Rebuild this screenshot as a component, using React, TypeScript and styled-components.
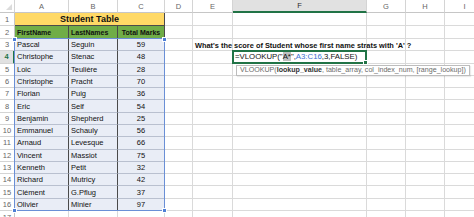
import React from "react";
import styled, { createGlobalStyle, css } from "styled-components";

const Global = createGlobalStyle`
  html, body { margin: 0; padding: 0; background: #fff; overflow: hidden; }
  body { font-family: "Liberation Sans", Arial, sans-serif; }
`;

const ROW_H = 172 / 14;

const Sheet = styled.div`
  display: grid;
  grid-template-columns: 15px 54px 49px 47px 28px 40px 134px 39px 39px 40px;
  grid-template-rows: 13px 13px 13px repeat(14, ${ROW_H}px) 14px;
  width: 474px;
  height: 217px;
  overflow: hidden;
  position: relative;
  font-size: 7.5px;
  color: #111;
`;

type Pos = { $row: number; $col: number; $span?: number };

const placed = css<Pos>`
  grid-row: ${(p) => p.$row};
  grid-column: ${(p) => p.$col} / span ${(p) => p.$span ?? 1};
`;

const Corner = styled.div<Pos>`
  ${placed};
  background: #fff;
  border-right: 1px solid #d4d4d4;
  border-bottom: 1px solid #c6c6c6;
  box-sizing: border-box;
  position: relative;
  &::after {
    content: "";
    position: absolute;
    right: 2px;
    bottom: 2px;
    border-left: 6px solid transparent;
    border-bottom: 6px solid #dcdcdc;
  }
`;

const ColHead = styled.div<Pos & { $sel?: boolean }>`
  ${placed};
  box-sizing: border-box;
  display: flex;
  align-items: center;
  justify-content: center;
  background: ${(p) => (p.$sel ? "#e1e1e1" : "#fff")};
  color: ${(p) => (p.$sel ? "#2a2a2a" : "#666")};
  border-right: 1px solid #d4d4d4;
  border-bottom: ${(p) => (p.$sel ? "2px solid #217346" : "1px solid #c6c6c6")};
  font-size: 7.5px;
`;

const RowHead = styled.div<Pos & { $sel?: boolean }>`
  ${placed};
  box-sizing: border-box;
  display: flex;
  align-items: center;
  justify-content: center;
  background: ${(p) => (p.$sel ? "#e1e1e1" : "#fff")};
  color: ${(p) => (p.$sel ? "#217346" : "#666")};
  font-weight: ${(p) => (p.$sel ? 700 : 400)};
  border-right: ${(p) => (p.$sel ? "2px solid #217346" : "1px solid #c6c6c6")};
  border-bottom: 1px solid #d4d4d4;
  font-size: 7.5px;
`;

type CellProps = Pos & {
  $bg?: string;
  $align?: "left" | "center" | "right";
  $bold?: boolean;
  $size?: number;
  $edgeR?: string;
  $edgeB?: string;
};

const Cell = styled.div<CellProps>`
  ${placed};
  box-sizing: border-box;
  display: flex;
  align-items: center;
  justify-content: ${(p) =>
    p.$align === "center" ? "center" : p.$align === "right" ? "flex-end" : "flex-start"};
  padding: 0 2px;
  white-space: nowrap;
  overflow: visible;
  background: ${(p) => p.$bg ?? "transparent"};
  font-weight: ${(p) => (p.$bold ? 700 : 400)};
  font-size: ${(p) => p.$size ?? 7.5}px;
  border-right: 1px solid ${(p) => p.$edgeR ?? "#dadada"};
  border-bottom: 1px solid ${(p) => p.$edgeB ?? "#dadada"};
`;

const Question = styled.div<Pos>`
  ${placed};
  display: flex;
  align-items: center;
  padding-left: 2px;
  white-space: nowrap;
  font-weight: 700;
  font-size: 7.4px;
  position: relative;
  z-index: 1;
`;

const RangeBox = styled.div<Pos & { $rowSpan: number }>`
  grid-row: ${(p) => p.$row} / span ${(p) => p.$rowSpan};
  grid-column: ${(p) => p.$col} / span ${(p) => p.$span ?? 1};
  border: 1px solid #6a8fd6;
  margin: -1px 0 0 -1px;
  position: relative;
  pointer-events: none;
  z-index: 2;
`;

const Handle = styled.span<{ $top?: boolean; $left?: boolean; $color: string }>`
  position: absolute;
  width: 3px;
  height: 3px;
  background: ${(p) => p.$color};
  border: 1px solid #fff;
  ${(p) => (p.$top ? "top: -2px;" : "bottom: -3px;")}
  ${(p) => (p.$left ? "left: -3px;" : "right: -3px;")}
`;

const ActiveCell = styled.div<Pos>`
  ${placed};
  box-sizing: border-box;
  margin: -1px 0 0 -1px;
  border: 2px solid #217346;
  background: #fff;
  display: flex;
  align-items: center;
  padding-left: 1px;
  white-space: nowrap;
  font-size: 7.8px;
  position: relative;
  z-index: 3;
`;

const Sel = styled.span`
  background: #bfbfbf;
`;

const Ref = styled.span`
  color: #3d6fd0;
`;

const Tip = styled.div<Pos>`
  ${placed};
  justify-self: start;
  align-self: stretch;
  margin: 1px 0 0 3px;
  box-sizing: border-box;
  border: 1px solid #bdbdbd;
  background: #fff;
  color: #6b6b6b;
  font-size: 7.1px;
  display: flex;
  align-items: center;
  padding: 0 3px 0 3px;
  white-space: nowrap;
  position: relative;
  z-index: 5;
  box-shadow: 1px 1px 1px rgba(0, 0, 0, 0.08);
`;

const TipArg = styled.b`
  color: #333;
`;

const COLS = ["A", "B", "C", "D", "E", "F", "G", "H", "I"];

const data: [string, string, number][] = [
  ["Pascal", "Seguin", 59],
  ["Christophe", "Stenac", 48],
  ["Loic", "Teulière", 28],
  ["Christophe", "Pracht", 70],
  ["Florian", "Puig", 36],
  ["Eric", "Self", 54],
  ["Benjamin", "Shepherd", 25],
  ["Emmanuel", "Schauly", 56],
  ["Arnaud", "Levesque", 66],
  ["Vincent", "Massiot", 75],
  ["Kenneth", "Petit", 32],
  ["Richard", "Mutricy", 42],
  ["Clément", "G.Pflug", 37],
  ["Olivier", "Minier", 97],
];

const TABLE_BG = "#e9edf6";
const TABLE_V = "#4a4a4a";
const TABLE_H = "#b9c0cf";

export default function App() {
  const cells: React.ReactNode[] = [];
  cells.push(<Corner key="corner" $row={1} $col={1} />);
  COLS.forEach((c, i) => (
    cells.push(
      <ColHead key={"h" + c} $row={1} $col={i + 2} $sel={c === "F"}>
        {c}
      </ColHead>
    )
  ));

  for (let r = 1; r <= 17; r++) {
    const gr = r + 1;
    cells.push(
      <RowHead key={"r" + r} $row={gr} $col={1} $sel={r === 4}>
        {r}
      </RowHead>
    );
    if (r === 1) {
      cells.push(
        <Cell key="title" $row={gr} $col={2} $span={3} $bg="#ffd966" $align="center" $bold $size={9} $edgeR={TABLE_V} $edgeB={TABLE_V}>
          Student Table
        </Cell>
      );
    } else if (r === 2) {
      ["FirstName", "LastNames", "Total Marks"].forEach((t, i) =>
        cells.push(
          <Cell key={"hd" + i} $row={gr} $col={i + 2} $bg="#70ad47" $bold $size={7} $align={i === 2 ? "center" : "left"} $edgeR={TABLE_V} $edgeB={TABLE_V}>
            {t}
          </Cell>
        )
      );
    } else if (r >= 3 && r <= 16) {
      const d = data[r - 3];
      cells.push(
        <Cell key={"a" + r} $row={gr} $col={2} $bg={TABLE_BG} $edgeR={TABLE_V} $edgeB={TABLE_H}>{d[0]}</Cell>,
        <Cell key={"b" + r} $row={gr} $col={3} $bg={TABLE_BG} $edgeR={TABLE_V} $edgeB={TABLE_H}>{d[1]}</Cell>,
        <Cell key={"c" + r} $row={gr} $col={4} $bg={TABLE_BG} $align="center" $edgeR={TABLE_V} $edgeB={TABLE_H}>{d[2]}</Cell>
      );
    } else {
      for (let c = 0; c < 3; c++) cells.push(<Cell key={`x${r}-${c}`} $row={gr} $col={c + 2} />);
    }
    for (let c = 3; c < 9; c++) {
      cells.push(<Cell key={`e${r}-${c}`} $row={gr} $col={c + 2} />);
    }
  }

  return (
    <>
      <Global />
      <Sheet>
        {cells}
        <Question $row={4} $col={6}>
          What's the score of Student whose first name strats with 'A' ?
        </Question>
        <RangeBox $row={4} $rowSpan={14} $col={2} $span={3}>
          <Handle $top $left $color="#4f7fd6" />
          <Handle $top $color="#4f7fd6" />
          <Handle $left $color="#4f7fd6" />
          <Handle $color="#4f7fd6" />
        </RangeBox>
        <ActiveCell $row={5} $col={7}>
          =VLOOKUP("<Sel>A*</Sel>",<Ref>A3:C16</Ref>,3,FALSE)
          <Handle $color="#217346" />
        </ActiveCell>
        <Tip $row={6} $col={7} $span={4}>
          VLOOKUP(<TipArg>lookup_value</TipArg>, table_array, col_index_num, [range_lookup])
        </Tip>
      </Sheet>
    </>
  );
}
